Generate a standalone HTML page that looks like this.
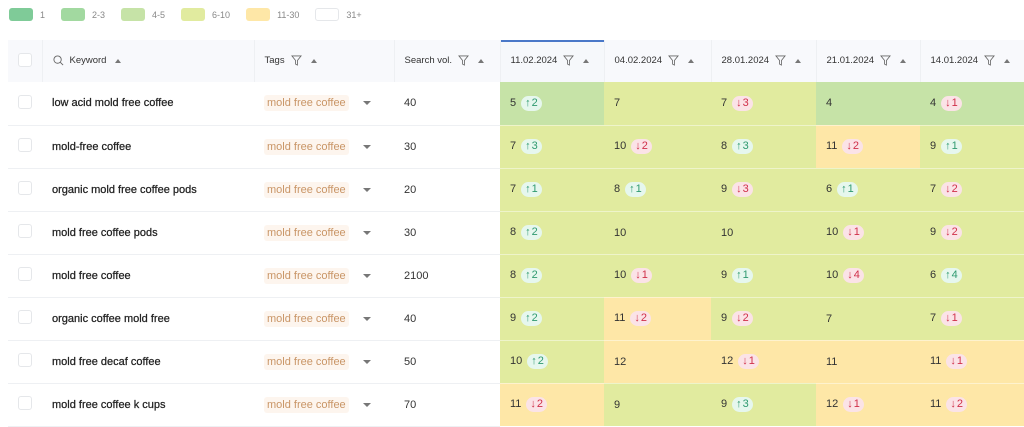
<!DOCTYPE html><html><head><meta charset="utf-8"><style>
*{box-sizing:border-box;margin:0;padding:0}
body{width:1024px;height:425px;overflow:hidden;background:#fff;font-family:"Liberation Sans",sans-serif;color:#333;position:relative}
.leg{position:absolute;top:8px;left:9px;display:flex;align-items:center;font-size:9px;color:#888}
.leg i{display:inline-block;width:24px;height:13px;border-radius:3px;margin-right:7px}
.leg span{margin-right:16px}
table{position:absolute;top:40px;left:8px;border-collapse:collapse;table-layout:fixed;width:1016px}
td,th{height:43px;border-bottom:1px solid #eef0f3;font-size:11px;text-align:left;font-weight:normal;padding-left:10px;white-space:nowrap}
th{height:42px;background:#f8f9fc;font-size:9.5px;color:#333;border-right:1px solid #eef0f3;border-bottom:none}
th.act{background:#f6f8fb;box-shadow:inset 0 2px 0 #4a78c8}
.cb{display:inline-block;width:14px;height:14px;border:1px solid #e5e7ea;border-radius:3px;background:#fff}
.kw{color:#222;font-size:11px;-webkit-text-stroke:0.25px #222}
.tag{background:#fdf5ee;color:#c99566;padding:2px 3px;border-radius:3px;font-size:11px}
.dd{display:inline-block;margin-left:14px;border-left:4px solid transparent;border-right:4px solid transparent;border-top:4px solid #777;vertical-align:middle}
.sort{display:inline-block;margin-left:9px;border-left:3.5px solid transparent;border-right:3.5px solid transparent;border-bottom:4px solid #777;vertical-align:middle}
svg.f{vertical-align:middle;margin-left:6px}
.g{background:#c6e3a7}.y{background:#e1eb9f}.o{background:#fee7a7}
td.g,td.y,td.o{border-bottom:1px solid rgba(255,255,255,.45)}
.b{display:inline-block;border-radius:8px;padding:0 4px;margin-left:5px;font-size:11px;line-height:15px}
.b b{font-weight:bold;margin-right:1px}
.u{background:#e6f7ee;color:#2f9a70}.d{background:#fbe3e7;color:#d0304a}
</style></head><body>
<div class="leg"><i style="background:#7fcb98"></i><span>1</span><i style="background:#a2d9a0"></i><span>2-3</span><i style="background:#c6e3a7"></i><span>4-5</span><i style="background:#e1eb9f"></i><span>6-10</span><i style="background:#fee7a7"></i><span>11-30</span><i style="background:#fff;border:1px solid #e5e7ea"></i><span>31+</span></div>
<table>
<colgroup><col style="width:34px"><col style="width:212px"><col style="width:140px"><col style="width:106px"><col style="width:104px"><col style="width:107px"><col style="width:105px"><col style="width:104px"><col style="width:104px"></colgroup>
<tr><th><span class="cb"></span></th>
<th><svg width="11" height="11" viewBox="0 0 12 12" style="vertical-align:middle;margin-right:6px"><circle cx="5" cy="5" r="4" fill="none" stroke="#666" stroke-width="1"/><path d="M8 8l3 3" stroke="#666"/></svg>Keyword<span class="sort"></span></th>
<th>Tags<svg class="f" width="11" height="11" viewBox="0 0 12 12"><path d="M1 1h10L7 6v5L5 10V6z" fill="none" stroke="#666" stroke-width="0.9"/></svg><span class="sort"></span></th>
<th>Search vol.<svg class="f" width="11" height="11" viewBox="0 0 12 12"><path d="M1 1h10L7 6v5L5 10V6z" fill="none" stroke="#666" stroke-width="0.9"/></svg><span class="sort"></span></th>
<th class="act">11.02.2024<svg class="f" width="11" height="11" viewBox="0 0 12 12"><path d="M1 1h10L7 6v5L5 10V6z" fill="none" stroke="#666" stroke-width="0.9"/></svg><span class="sort"></span></th>
<th>04.02.2024<svg class="f" width="11" height="11" viewBox="0 0 12 12"><path d="M1 1h10L7 6v5L5 10V6z" fill="none" stroke="#666" stroke-width="0.9"/></svg><span class="sort"></span></th>
<th>28.01.2024<svg class="f" width="11" height="11" viewBox="0 0 12 12"><path d="M1 1h10L7 6v5L5 10V6z" fill="none" stroke="#666" stroke-width="0.9"/></svg><span class="sort"></span></th>
<th>21.01.2024<svg class="f" width="11" height="11" viewBox="0 0 12 12"><path d="M1 1h10L7 6v5L5 10V6z" fill="none" stroke="#666" stroke-width="0.9"/></svg><span class="sort"></span></th>
<th style="border-right:none">14.01.2024<svg class="f" width="11" height="11" viewBox="0 0 12 12"><path d="M1 1h10L7 6v5L5 10V6z" fill="none" stroke="#666" stroke-width="0.9"/></svg><span class="sort"></span></th></tr>
<tr><td><span class="cb"></span></td><td class="kw">low acid mold free coffee</td><td><span class="tag">mold free coffee</span><span class="dd"></span></td><td>40</td>
<td class="g">5<span class="b u"><b>↑</b>2</span></td><td class="y">7</td><td class="y">7<span class="b d"><b>↓</b>3</span></td><td class="g">4</td><td class="g">4<span class="b d"><b>↓</b>1</span></td></tr>
<tr><td><span class="cb"></span></td><td class="kw">mold-free coffee</td><td><span class="tag">mold free coffee</span><span class="dd"></span></td><td>30</td>
<td class="y">7<span class="b u"><b>↑</b>3</span></td><td class="y">10<span class="b d"><b>↓</b>2</span></td><td class="y">8<span class="b u"><b>↑</b>3</span></td><td class="o">11<span class="b d"><b>↓</b>2</span></td><td class="y">9<span class="b u"><b>↑</b>1</span></td></tr>
<tr><td><span class="cb"></span></td><td class="kw">organic mold free coffee pods</td><td><span class="tag">mold free coffee</span><span class="dd"></span></td><td>20</td>
<td class="y">7<span class="b u"><b>↑</b>1</span></td><td class="y">8<span class="b u"><b>↑</b>1</span></td><td class="y">9<span class="b d"><b>↓</b>3</span></td><td class="y">6<span class="b u"><b>↑</b>1</span></td><td class="y">7<span class="b d"><b>↓</b>2</span></td></tr>
<tr><td><span class="cb"></span></td><td class="kw">mold free coffee pods</td><td><span class="tag">mold free coffee</span><span class="dd"></span></td><td>30</td>
<td class="y">8<span class="b u"><b>↑</b>2</span></td><td class="y">10</td><td class="y">10</td><td class="y">10<span class="b d"><b>↓</b>1</span></td><td class="y">9<span class="b d"><b>↓</b>2</span></td></tr>
<tr><td><span class="cb"></span></td><td class="kw">mold free coffee</td><td><span class="tag">mold free coffee</span><span class="dd"></span></td><td>2100</td>
<td class="y">8<span class="b u"><b>↑</b>2</span></td><td class="y">10<span class="b d"><b>↓</b>1</span></td><td class="y">9<span class="b u"><b>↑</b>1</span></td><td class="y">10<span class="b d"><b>↓</b>4</span></td><td class="y">6<span class="b u"><b>↑</b>4</span></td></tr>
<tr><td><span class="cb"></span></td><td class="kw">organic coffee mold free</td><td><span class="tag">mold free coffee</span><span class="dd"></span></td><td>40</td>
<td class="y">9<span class="b u"><b>↑</b>2</span></td><td class="o">11<span class="b d"><b>↓</b>2</span></td><td class="y">9<span class="b d"><b>↓</b>2</span></td><td class="y">7</td><td class="y">7<span class="b d"><b>↓</b>1</span></td></tr>
<tr><td><span class="cb"></span></td><td class="kw">mold free decaf coffee</td><td><span class="tag">mold free coffee</span><span class="dd"></span></td><td>50</td>
<td class="y">10<span class="b u"><b>↑</b>2</span></td><td class="o">12</td><td class="o">12<span class="b d"><b>↓</b>1</span></td><td class="o">11</td><td class="o">11<span class="b d"><b>↓</b>1</span></td></tr>
<tr><td><span class="cb"></span></td><td class="kw">mold free coffee k cups</td><td><span class="tag">mold free coffee</span><span class="dd"></span></td><td>70</td>
<td class="o">11<span class="b d"><b>↓</b>2</span></td><td class="y">9</td><td class="y">9<span class="b u"><b>↑</b>3</span></td><td class="o">12<span class="b d"><b>↓</b>1</span></td><td class="o">11<span class="b d"><b>↓</b>2</span></td></tr>
</table>
</body></html>
